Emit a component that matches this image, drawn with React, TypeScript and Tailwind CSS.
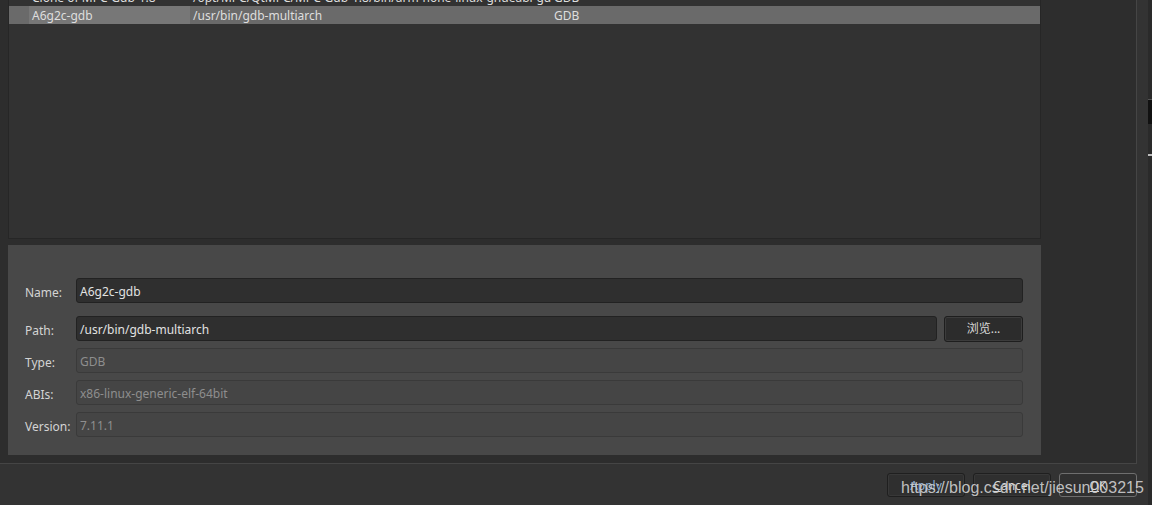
import React from "react";

const font = { fontFamily: '"Noto Sans", "Noto Sans CJK SC", sans-serif' };

function Row({ c1, c2, c3, selected, className = "" }: { c1: string; c2: string; c3: string; selected?: boolean; className?: string }) {
  return (
    <div className={`flex h-[18px] pl-[20px] text-[12px] leading-[18px] text-[#dedede] whitespace-nowrap ${selected ? "bg-[#6a6a6a]" : ""} ${className}`}>
      <div className={`w-[161px] h-full pl-[3px] pt-[1px] overflow-hidden ${selected ? "bg-[#777777]" : ""}`}>{c1}</div>
      <div className="w-[361px] h-full pl-[3px] pt-[1px] overflow-hidden">{c2}</div>
      <div className="h-full pl-[3px] pt-[1px]">{c3}</div>
    </div>
  );
}

function Field({ label, value, disabled, children, mt }: { label: string; value: string; disabled?: boolean; children?: React.ReactNode; mt: string }) {
  return (
    <div className={`flex items-center h-[25px] ${mt}`}>
      <div className="w-[51px] text-[12px] text-[#d4d4d4] pt-[4px]">{label}</div>
      <div
        className={`flex-1 h-[25px] rounded-[3px] border flex items-center pl-[3px] pt-[3px] text-[12px] ${
          disabled ? "bg-[#454545] border-[#3a3a3a] text-[#8e8e8e]" : "bg-[#2f2f2f] border-[#222222] text-[#e2e2e2]"
        }`}
      >
        {value}
      </div>
      {children}
    </div>
  );
}

function Btn({ children, def }: { children: React.ReactNode; def?: boolean }) {
  return (
    <div
      className={`w-[78px] h-[24px] rounded-[3px] border flex items-center justify-center pt-[1px] text-[12px] ${
        def ? "border-[#6e6e6e] bg-[#303030]" : "border-[#1f1f1f] bg-[#2f2f2f] shadow-[inset_0_0_0_1px_#383838]"
      }`}
    >
      {children}
    </div>
  );
}

export default function App() {
  return (
    <div className="w-[1152px] h-[505px] bg-[#333333] overflow-hidden flex relative" style={font}>
      <div className="w-[1148px] flex flex-col">
        <div className="w-[1137px] h-[464px] bg-[#2d2d2d] border-r border-b border-[#454545] pl-[8px] flex flex-col">
          <div className="w-[1033px] h-[239px] bg-[#323232] border-l border-r border-b border-[#262626] overflow-hidden">
            <Row
              className="-mt-[12px]"
              c1="Clone of MPC-Gdb-1.8"
              c2="/opt/MPC/QtMPC/MPC-Gdb-1.8/bin/arm-none-linux-gnueabi-gdb"
              c3="GDB"
            />
            <Row selected c1="A6g2c-gdb" c2="/usr/bin/gdb-multiarch" c3="GDB" />
          </div>
          <div className="mt-[6px] w-[1033px] h-[210px] bg-[#484848] pl-[17px] pr-[18px] pt-[33px]">
            <Field label="Name:" value="A6g2c-gdb" mt="" />
            <Field label="Path:" value="/usr/bin/gdb-multiarch" mt="mt-[13px]">
              <div className="ml-[7px] w-[79px] h-[26px] rounded-[3px] border border-[#1e1e1e] bg-[#2c2c2c] shadow-[inset_0_0_0_1px_#3c3c3c] flex items-center justify-center pt-[1px] text-[12px] text-[#d8d8d8]">
                浏览...
              </div>
            </Field>
            <Field label="Type:" value="GDB" disabled mt="mt-[7px]" />
            <Field label="ABIs:" value="x86-linux-generic-elf-64bit" disabled mt="mt-[7px]" />
            <Field label="Version:" value="7.11.1" disabled mt="mt-[7px]" />
          </div>
        </div>
        <div className="flex justify-end gap-[8px] pr-[11px] mt-[9px]">
          <Btn>
            <span className="text-[#8fb0d4]">Apply</span>
          </Btn>
          <Btn>
            <span className="text-[#d8d8d8]">
              <span className="underline">C</span>ancel
            </span>
          </Btn>
          <Btn def>
            <span className="text-[#d8d8d8]">
              <span className="underline">O</span>K
            </span>
          </Btn>
        </div>
      </div>
      <div className="w-[4px] h-full bg-[#2a2a2a] flex flex-col">
        <div className="h-[99px]" />
        <div className="h-[1px] bg-[#555555]" />
        <div className="h-[24px] bg-[#111111]" />
        <div className="h-[30px]" />
        <div className="h-[2px] bg-[#bbbbbb]" />
      </div>
      <div
        className="absolute left-[901px] top-[478px] text-[16px] leading-[20px] text-[#d2d2d2]/90 whitespace-nowrap"
        style={{ fontFamily: '"Liberation Sans", Arial, sans-serif' }}
      >
        https://blog.csdn.net/jiesun003215
      </div>
    </div>
  );
}
